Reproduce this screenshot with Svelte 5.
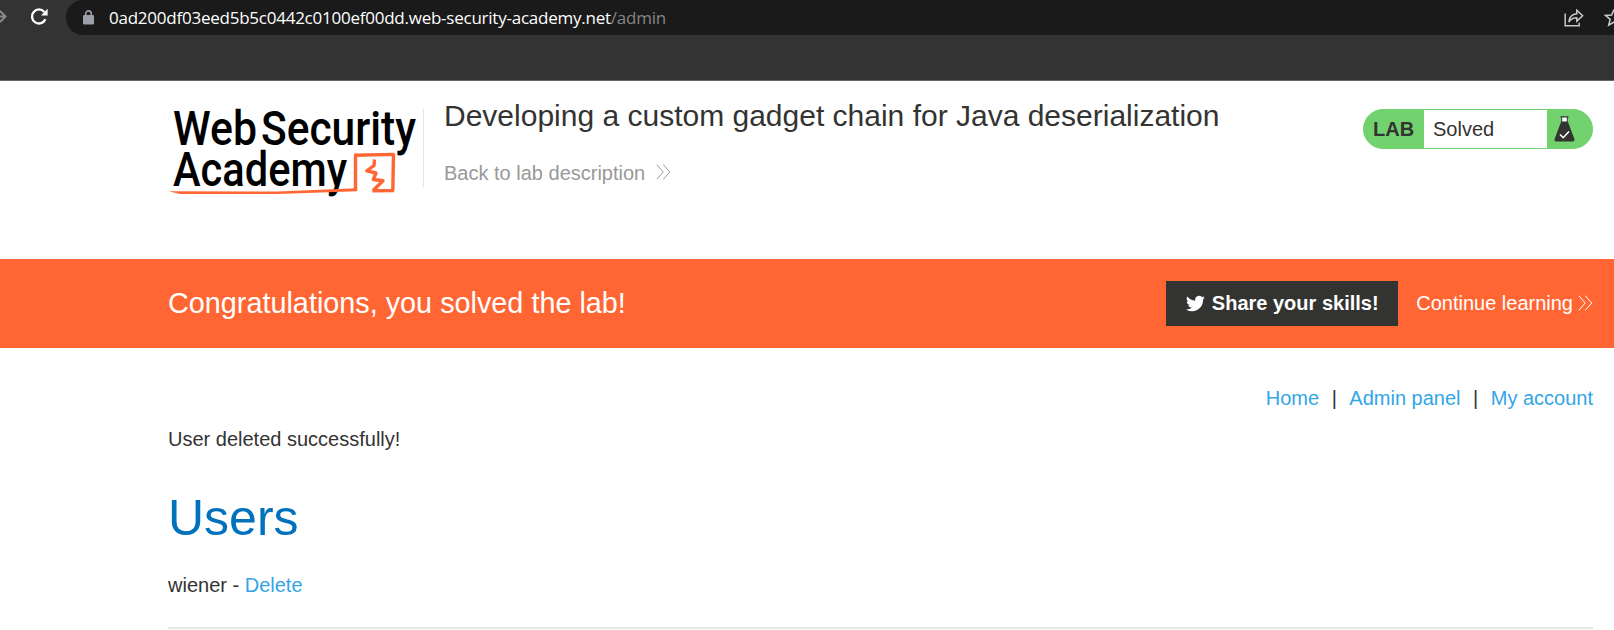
<script>
	let host = '0ad200df03eed5b5c0442c0100ef00dd.web-security-academy.net';
	let path = '/admin';

	let links = ['Home', 'Admin panel', 'My account'];
	let users = ['wiener'];
</script>

{#snippet chevrons()}
	<svg class="chevrons" width="15" height="16" viewBox="0 0 15 16">
		<path d="M0.8 0.7 L7.2 8 L0.8 15.3 M7.3 0.7 L13.8 8 L7.3 15.3" />
	</svg>
{/snippet}

<div class="browser">
	<div class="toolbar">
		<svg class="forward" width="7" height="18" viewBox="0 0 7 18">
			<path d="M0 8.5 H5 M0 3 L5.5 8.5 L0 14" />
		</svg>
		<svg class="reload" width="18" height="18" viewBox="0 0 18 18">
			<path class="arc" d="M14.3 3.9 A7 7 0 1 0 15.4 11.3" />
			<path class="tip" d="M17.6 0.8 V7.4 H11 Z" />
		</svg>
		<div class="address">
			<svg class="lock" width="11" height="15" viewBox="0 0 11 15">
				<path class="shackle" d="M2.7 6 V3.7 A2.8 2.8 0 0 1 8.3 3.7 V6" />
				<rect x="0" y="5" width="11" height="9.5" rx="1.3" />
			</svg>
			<span class="url"><span class="host">{host}</span>{path}</span>
			<svg class="share-page" width="20" height="18" viewBox="0 0 20 18">
				<path d="M1.2 4.5 V16.7 H15.2 V13.8" />
				<path d="M4.8 13 C5.2 8.3 8 5.3 12.8 4.8 V1.2 L18.6 6.8 L12.8 12.2 V8.8 C9 8.8 6.5 10.2 4.8 13 Z" />
			</svg>
			<svg class="star" width="10" height="19" viewBox="0 0 10 19">
				<path d="M10 1.5 L7.6 7 L1.4 7.4 L6.2 11.3 L4.7 17.2 L10 14" />
			</svg>
		</div>
	</div>
</div>

<header class="container">
	<svg class="logo" width="255" height="90" viewBox="0 0 255 90">
		<g class="words">
			<text x="5" y="39" textLength="84" lengthAdjust="spacingAndGlyphs">Web</text>
			<text x="93" y="39" textLength="155" lengthAdjust="spacingAndGlyphs">Security</text>
			<text x="5" y="80" textLength="174" lengthAdjust="spacingAndGlyphs">Academy</text>
		</g>
		<path class="stroke" d="M187.5 85 V49.8 M186 49.2 L226.5 48.4 M225.5 48 L224.8 84.5 M226 84.6 L204.5 84.7" />
		<path class="line" d="M0.5 85.3 L110 85.4 L188 82.2 L188.5 85.3 L110 88 L12 88 Z" />
		<path class="stroke" d="M206.5 53.5 L206 59.5 L198.8 64.8 L208 67 L205.3 73.5 L215 74.8 L205 84.5" />
	</svg>
	<div class="title">
		<h2>Developing a custom gadget chain for Java deserialization</h2>
		<a class="back" href="#lab">Back to lab description {@render chevrons()}</a>
	</div>
	<div class="status">
		<strong>LAB</strong>
		<span class="state">Solved</span>
		<svg class="flask" width="21" height="26" viewBox="0 0 21 26">
			<rect class="neck" x="7.5" y="1" width="6" height="5" />
			<path class="dark" d="M6.5 0.3 H14.5 V1.4 H13.8 V5.5 L20.4 23 Q21 25.5 18.5 25.5 H2.5 Q0 25.5 0.6 23 L7.2 5.5 V1.4 H6.5 Z M8.2 1.4 V5.5 H12.8 V1.4 Z" />
			<path class="tick" d="M6 18.5 L9.2 21.7 L15 15.5" />
		</svg>
	</div>
</header>

<section class="banner">
	<div class="container">
		<h4>Congratulations, you solved the lab!</h4>
		<button class="share">
			<svg width="19" height="17" viewBox="0 2 24 20">
				<path d="M23.9 4.6a10 10 0 0 1-2.8.8 4.9 4.9 0 0 0 2.1-2.7 9.8 9.8 0 0 1-3.1 1.2 4.9 4.9 0 0 0-8.4 4.5A14 14 0 0 1 1.7 3.1a4.9 4.9 0 0 0 1.5 6.6 4.9 4.9 0 0 1-2.2-.6v.1a4.9 4.9 0 0 0 3.9 4.8 5 5 0 0 1-2.2.1 4.9 4.9 0 0 0 4.6 3.4A9.9 9.9 0 0 1 0 19.5 14 14 0 0 0 21.5 7.1a10 10 0 0 0 2.4-2.5z" />
			</svg>
			Share your skills!
		</button>
		<a class="continue" href="#next">Continue learning {@render chevrons()}</a>
	</div>
</section>

<main class="container">
	<nav>
		{#each links as link, i}
			{#if i > 0}<span>|</span>{/if}
			<a href="#{link}">{link}</a>
		{/each}
	</nav>
	<p>User deleted successfully!</p>
	<h1>Users</h1>
	{#each users as user}
		<div class="user">{user} - <a href="#delete">Delete</a></div>
	{/each}
	<hr>
</main>

<style>
	:global(body) {
		margin: 0;
		overflow: hidden;
		background: #fff;
		color: #333332;
		font-family: Arial, 'Liberation Sans', sans-serif;
		font-size: 20px;
		line-height: 24px;
	}

	h1, h2, h4, p {
		margin: 0;
		font-weight: 400;
	}

	a {
		color: #33a5e6;
		text-decoration: none;
	}

	svg {
		display: block;
		flex: none;
	}

	.browser {
		box-sizing: border-box;
		height: 81px;
		background: #333;
		border-bottom: 1px solid #6a6666;
	}

	.toolbar {
		display: flex;
		height: 35px;
	}

	.forward {
		margin-top: 8px;
		fill: none;
		stroke: #8b8b8b;
		stroke-width: 2;
	}

	.reload {
		margin: 8px 18px 0 23px;
	}

	.arc {
		fill: none;
		stroke: #fff;
		stroke-width: 2.3;
	}

	.tip {
		fill: #fff;
	}

	.address {
		flex: 1;
		display: flex;
		align-items: center;
		padding-left: 17px;
		background: #1a1a1a;
		border-radius: 17px 0 0 17px;
	}

	.lock {
		margin-right: 15px;
		fill: #9aa0a6;
	}

	.shackle {
		fill: none;
		stroke: #9aa0a6;
		stroke-width: 1.6;
	}

	.url {
		flex: 1;
		color: #858585;
		font-family: 'Segoe UI', 'Open Sans', sans-serif;
		font-size: 17px;
		letter-spacing: -0.24px;
		white-space: nowrap;
	}

	.host {
		color: #fff;
	}

	.share-page, .star {
		fill: none;
		stroke: #c8c8c8;
		stroke-width: 1.5;
	}

	.share-page {
		margin-right: 20px;
	}

	.container {
		display: flex;
		margin-left: 168px;
		margin-right: 21px;
	}

	header {
		height: 150px;
		padding-top: 28px;
	}

	.logo {
		margin-top: -3px;
		overflow: visible;
	}

	.words {
		font-family: Roboto, sans-serif;
		font-size: 48px;
		font-weight: 500;
		fill: #000;
	}

	.stroke {
		fill: none;
		stroke: #ff6633;
		stroke-width: 3.4;
		stroke-linejoin: round;
	}

	.line {
		fill: #ff6633;
	}

	.title {
		flex: 1;
		height: 78px;
		padding-left: 20px;
		border-left: 1px solid #e5e5e5;
	}

	h2 {
		margin-top: -11px;
		font-size: 30px;
		line-height: 36px;
		white-space: nowrap;
	}

	.back {
		display: flex;
		align-items: center;
		gap: 11px;
		margin-top: 27px;
		color: #999;
	}

	.back .chevrons {
		margin-top: -2px;
	}

	.chevrons {
		fill: none;
		stroke: currentColor;
		stroke-width: 1;
	}

	.status {
		box-sizing: border-box;
		display: flex;
		align-items: center;
		width: 230px;
		height: 40px;
		border: 1px solid #72d26e;
		border-radius: 20px;
		background: #72d26e;
	}

	.status strong {
		width: 51px;
		padding-left: 9px;
	}

	.state {
		width: 114px;
		padding-left: 9px;
		line-height: 38px;
		background: #fff;
	}

	.flask {
		margin-left: 7px;
	}

	.neck {
		fill: #fff;
	}

	.dark {
		fill: #333332;
		fill-rule: evenodd;
	}

	.tick {
		fill: none;
		stroke: #fff;
		stroke-width: 1.6;
	}

	.banner {
		background: #ff6633;
		color: #fff;
	}

	.banner .container {
		height: 89px;
		align-items: center;
	}

	h4 {
		flex: 1;
		padding-bottom: 1px;
		font-size: 28.8px;
	}

	.share {
		display: flex;
		align-items: center;
		justify-content: center;
		gap: 7px;
		width: 232px;
		height: 45px;
		margin-right: 18px;
		padding: 0;
		border: 0;
		background: #333332;
		color: #fff;
		font: bold 20px Arial, 'Liberation Sans', sans-serif;
	}

	.share svg {
		fill: #fff;
	}

	.continue {
		display: flex;
		align-items: center;
		gap: 5px;
		padding-bottom: 1px;
		color: #fff;
	}

	main {
		flex-direction: column;
		padding-top: 38px;
	}

	nav {
		display: flex;
		justify-content: flex-end;
		gap: 12.5px;
	}

	p {
		margin-top: 17px;
	}

	h1 {
		margin-top: 37px;
		color: #0071bd;
		font-size: 50px;
		line-height: 60px;
	}

	.user {
		margin-top: 25px;
	}

	hr {
		align-self: stretch;
		height: 2px;
		margin: 30px 0 0;
		border: 0;
		background: #e5e5e5;
	}
</style>
